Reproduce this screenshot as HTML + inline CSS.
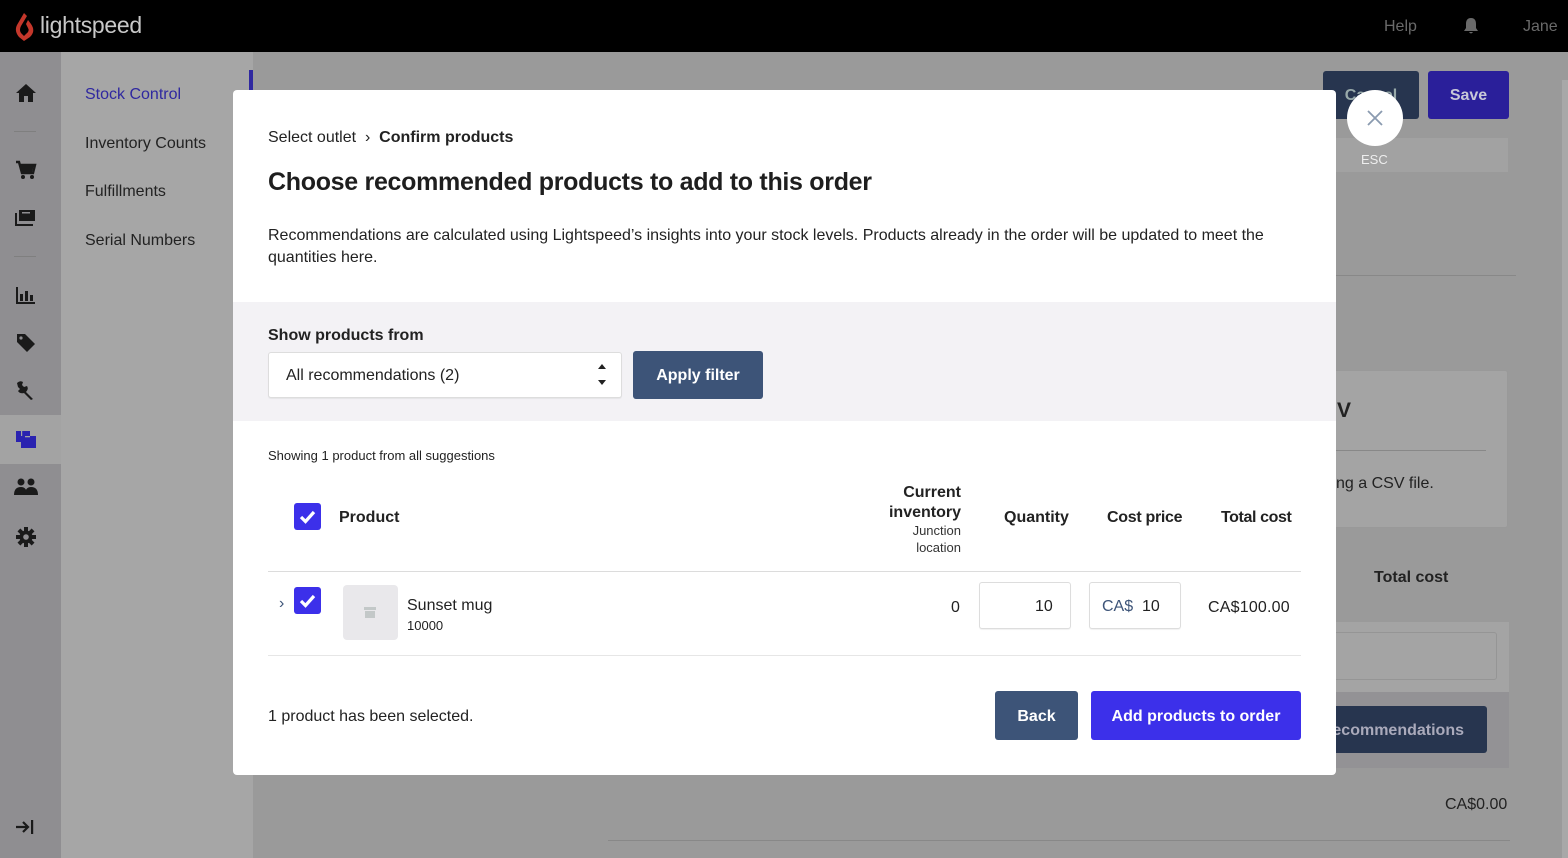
<!DOCTYPE html>
<html><head><meta charset="utf-8"><style>
*{margin:0;padding:0;box-sizing:border-box}
body{width:1568px;height:858px;overflow:hidden;position:relative;background:#9a9a9a;font-family:"Liberation Sans",sans-serif;color:#222}
.a{position:absolute}
.t{position:absolute;white-space:nowrap}
.btn{position:absolute;color:#fff;font-weight:bold;font-size:16px;display:flex;align-items:center;justify-content:center;border-radius:3px;padding-top:2px}
.cb{position:absolute;width:27px;height:27px;background:#3c30ea;border-radius:3px}
.inp{position:absolute;border:1px solid #ddd;border-radius:3px;background:#fff;box-shadow:0 1px 1px rgba(0,0,0,.06)}
</style></head><body>
<div class="a" style="left:0;top:0;width:1568px;height:52px;background:#000"></div>
<svg class="a" style="left:14px;top:12px" width="24" height="30" viewBox="0 0 24 30"><path d="M10 1 L3 13 Q0 19 5 25 L10 29 L16 25 Q22 19 17 12 L14 8 L12 12 L14 16 Q16 19 12 22 L10 24 L7 21 Q5 18 7 14 L13 4 Z" fill="#c4372b"/></svg>
<div class="t" style="left:40px;top:12px;font-size:23px;color:#c8c8c8;letter-spacing:-0.3px">lightspeed</div>
<div class="t" style="left:1384px;top:18px;font-size:16px;color:#6a6a6a">Help</div>
<svg class="a" style="left:1463px;top:17px" width="16" height="18" viewBox="0 0 16 18"><path d="M8 1 C4 1 3 4 3 7 L3 11 L1 14 L15 14 L13 11 L13 7 C13 4 12 1 8 1Z M6 15 Q8 18 10 15Z" fill="#6a6a6a"/></svg>
<div class="t" style="left:1523px;top:18px;font-size:16px;color:#6a6a6a">Jane</div>
<div class="a" style="left:0;top:52px;width:61px;height:806px;background:#8f8e91"></div>
<div class="a" style="left:0;top:415px;width:61px;height:49px;background:#a3a3a3"></div>
<div class="a" style="left:61px;top:52px;width:192px;height:806px;background:#a6a6a6"></div>
<div class="a" style="left:14px;top:131px;width:22px;height:1px;background:#7f7f7f"></div>
<div class="a" style="left:14px;top:256px;width:22px;height:1px;background:#7f7f7f"></div>
<svg class="a" style="left:15px;top:83px" width="22" height="20" viewBox="0 0 22 20"><path d="M11 1 L1 10 L4 10 L4 19 L9 19 L9 13 L13 13 L13 19 L18 19 L18 10 L21 10Z" fill="#1a1a1a"/></svg>
<svg class="a" style="left:15px;top:160px" width="22" height="20" viewBox="0 0 22 20"><path d="M1 2 L4 2 L7 13 L18 13 L20 5 L5 5" fill="none" stroke="#1a1a1a" stroke-width="2.4"/><path d="M6 5 L19 5 L17 12 L7 12Z" fill="#1a1a1a"/><circle cx="8" cy="17" r="2" fill="#1a1a1a"/><circle cx="17" cy="17" r="2" fill="#1a1a1a"/></svg>
<svg class="a" style="left:15px;top:209px" width="22" height="18" viewBox="0 0 22 18"><rect x="4" y="1" width="16" height="11" fill="#1a1a1a"/><path d="M1 4 L1 16 L18 16" fill="none" stroke="#1a1a1a" stroke-width="2"/><rect x="7" y="3" width="8" height="1.5" fill="#8f8e91"/></svg>
<svg class="a" style="left:16px;top:286px" width="20" height="18" viewBox="0 0 20 18"><path d="M1 1 L1 17 L19 17" fill="none" stroke="#1a1a1a" stroke-width="2"/><rect x="4" y="8" width="3" height="7" fill="#1a1a1a"/><rect x="9" y="5" width="3" height="10" fill="#1a1a1a"/><rect x="14" y="9" width="3" height="6" fill="#1a1a1a"/></svg>
<svg class="a" style="left:16px;top:333px" width="20" height="20" viewBox="0 0 20 20"><path d="M1 1 L9 1 L19 11 L11 19 L1 9Z" fill="#1a1a1a"/><circle cx="5" cy="5" r="1.6" fill="#8f8e91"/></svg>
<svg class="a" style="left:14px;top:379px" width="22" height="22" viewBox="0 0 22 22"><path d="M3 4 Q6 1 9 3 L8 6 L10 8 L13 7 Q15 10 12 13 L19 20 L17 21 L10 14 Q6 15 4 12 L6 10 L4 8Z" fill="#1a1a1a"/></svg>
<svg class="a" style="left:16px;top:430px" width="20" height="19" viewBox="0 0 20 19"><rect x="0" y="1" width="14" height="11" fill="#2a22b0"/><rect x="5" y="6" width="15" height="12" fill="#2a22b0"/><rect x="5" y="1" width="1.2" height="5" fill="#a3a3a3"/><rect x="9" y="6" width="5" height="1.3" fill="#a3a3a3"/></svg>
<svg class="a" style="left:14px;top:478px" width="24" height="18" viewBox="0 0 24 18"><circle cx="7" cy="4" r="3.5" fill="#1a1a1a"/><circle cx="17" cy="4" r="3.5" fill="#1a1a1a"/><path d="M0 17 Q0 9 7 9 Q13 9 13 17Z M11 17 Q11 9 17 9 Q24 9 24 17Z" fill="#1a1a1a"/></svg>
<svg class="a" style="left:16px;top:527px" width="20" height="20" viewBox="0 0 20 20"><g fill="#1a1a1a"><circle cx="10" cy="10" r="6.5"/><rect x="8" y="0" width="4" height="20"/><rect x="0" y="8" width="20" height="4"/><rect x="8" y="0" width="4" height="20" transform="rotate(45 10 10)"/><rect x="8" y="0" width="4" height="20" transform="rotate(-45 10 10)"/></g><circle cx="10" cy="10" r="2.8" fill="#8f8e91"/></svg>
<svg class="a" style="left:15px;top:818px" width="20" height="18" viewBox="0 0 20 18"><path d="M1 9 L13 9 M8 4 L13 9 L8 14" fill="none" stroke="#1a1a1a" stroke-width="2.2"/><rect x="16" y="2" width="2.2" height="14" fill="#1a1a1a"/></svg>
<div class="t" style="left:85px;top:86px;font-size:16px;color:#2f28a0">Stock Control</div>
<div class="t" style="left:85px;top:135px;font-size:16px">Inventory Counts</div>
<div class="t" style="left:85px;top:183px;font-size:16px">Fulfillments</div>
<div class="t" style="left:85px;top:232px;font-size:16px">Serial Numbers</div>
<div class="a" style="left:249px;top:70px;width:4px;height:20px;background:#2f28a0"></div>
<div class="btn" style="left:1323px;top:71px;width:96px;height:48px;background:#27354f;color:#9aa">Cancel</div>
<div class="btn" style="left:1428px;top:71px;width:81px;height:48px;background:#2a1f9a;color:#c8c8d8">Save</div>
<div class="a" style="left:1336px;top:138px;width:172px;height:34px;background:#a2a2a2"></div>
<div class="a" style="left:1336px;top:275px;width:180px;height:1px;background:#888"></div>
<div class="a" style="left:1330px;top:370px;width:178px;height:158px;background:#a4a4a4;border:1px solid #999;border-radius:3px"></div>
<div class="t" style="left:1337px;top:399px;font-size:21px;font-weight:bold">V</div>
<div class="a" style="left:1336px;top:450px;width:150px;height:1px;background:#888"></div>
<div class="t" style="left:1336px;top:475px;font-size:16px">ng a CSV file.</div>
<div class="t" style="left:1374px;top:569px;font-size:16px;font-weight:bold">Total cost</div>
<div class="a" style="left:1336px;top:622px;width:173px;height:146px;background:#939295"></div>
<div class="a" style="left:1336px;top:622px;width:173px;height:70px;background:#a4a4a4"></div>
<div class="a" style="left:1330px;top:632px;width:167px;height:48px;background:#a4a4a4;border:1px solid #959595;border-radius:3px"></div>
<div class="btn" style="left:1320px;top:706px;width:167px;height:47px;background:#27354f;color:#aab;justify-content:flex-end;padding-right:23px">ecommendations</div>
<div class="t" style="left:1445px;top:796px;font-size:16px">CA$0.00</div>
<div class="a" style="left:608px;top:840px;width:902px;height:1px;background:#888"></div>
<div class="a" style="left:1562px;top:80px;width:6px;height:778px;background:#a8a8a8"></div>
<div class="a" style="left:233px;top:90px;width:1103px;height:685px;background:#fff;border-radius:4px"></div>
<div class="t" style="left:268px;top:129px;font-size:16px">Select outlet &nbsp;›&nbsp; <b>Confirm products</b></div>
<div class="t" style="left:268px;top:168px;font-size:25px;font-weight:bold;color:#1e1e1e;letter-spacing:-0.3px">Choose recommended products to add to this order</div>
<div class="a" style="left:268px;top:225px;width:1020px;font-size:16px;line-height:22px">Recommendations are calculated using Lightspeed’s insights into your stock levels. Products already in the order will be updated to meet the quantities here.</div>
<div class="a" style="left:233px;top:302px;width:1103px;height:119px;background:#f3f2f5"></div>
<div class="t" style="left:268px;top:327px;font-size:16px;font-weight:bold">Show products from</div>
<div class="inp" style="left:268px;top:352px;width:354px;height:46px"></div>
<div class="t" style="left:286px;top:367px;font-size:16px">All recommendations (2)</div>
<svg class="a" style="left:597px;top:362px" width="10" height="26" viewBox="0 0 10 26"><path d="M1 7 L5 2 L9 7Z M1 18 L5 23 L9 18Z" fill="#222"/></svg>
<div class="btn" style="left:633px;top:351px;width:130px;height:48px;background:#3d5478">Apply filter</div>
<div class="t" style="left:268px;top:448px;font-size:13px">Showing 1 product from all suggestions</div>
<div class="cb" style="left:294px;top:503px"></div>
<svg class="a" style="left:294px;top:503px" width="27" height="27" viewBox="0 0 27 27"><path d="M7 14 L11.5 18.5 L20 9" fill="none" stroke="#fff" stroke-width="3.2"/></svg>
<div class="t" style="left:339px;top:509px;font-size:16px;font-weight:bold">Product</div>
<div class="a" style="left:840px;top:483px;width:121px;text-align:right;font-size:16px;font-weight:bold;line-height:20px">Current<br>inventory</div>
<div class="a" style="left:840px;top:522px;width:121px;text-align:right;font-size:13px;line-height:17px;color:#333">Junction<br>location</div>
<div class="t" style="left:1004px;top:509px;font-size:16px;font-weight:bold">Quantity</div>
<div class="t" style="left:1107px;top:509px;font-size:16px;font-weight:bold;letter-spacing:-0.3px">Cost price</div>
<div class="t" style="left:1221px;top:509px;font-size:16px;font-weight:bold;letter-spacing:-0.4px">Total cost</div>
<div class="a" style="left:268px;top:571px;width:1033px;height:1px;background:#dcdcdc"></div>
<div class="t" style="left:279px;top:595px;font-size:16px;color:#3d5478">›</div>
<div class="cb" style="left:294px;top:587px"></div>
<svg class="a" style="left:294px;top:587px" width="27" height="27" viewBox="0 0 27 27"><path d="M7 14 L11.5 18.5 L20 9" fill="none" stroke="#fff" stroke-width="3.2"/></svg>
<div class="a" style="left:343px;top:585px;width:55px;height:55px;background:#e9e8eb;border-radius:4px"></div>
<div class="a" style="left:364px;top:607px;width:12px;height:3px;background:#c3c8c8"></div>
<div class="a" style="left:365px;top:611px;width:10px;height:7px;background:#c3c8c8"></div>
<div class="t" style="left:407px;top:597px;font-size:16px">Sunset mug</div>
<div class="t" style="left:407px;top:618px;font-size:13px">10000</div>
<div class="t" style="left:951px;top:599px;font-size:16px">0</div>
<div class="inp" style="left:979px;top:582px;width:92px;height:47px"></div>
<div class="t" style="left:1035px;top:598px;font-size:16px">10</div>
<div class="inp" style="left:1089px;top:582px;width:92px;height:47px"></div>
<div class="t" style="left:1102px;top:598px;font-size:16px"><span style="color:#3d5478">CA$</span>&nbsp; 10</div>
<div class="t" style="left:1208px;top:599px;font-size:16px;letter-spacing:0.2px">CA$100.00</div>
<div class="a" style="left:268px;top:655px;width:1033px;height:1px;background:#e6e6e6"></div>
<div class="t" style="left:268px;top:708px;font-size:16px">1 product has been selected.</div>
<div class="btn" style="left:995px;top:691px;width:83px;height:49px;background:#3d5478">Back</div>
<div class="btn" style="left:1091px;top:691px;width:210px;height:49px;background:#3c30ea">Add products to order</div>
<div class="a" style="left:1347px;top:90px;width:56px;height:56px;border-radius:50%;background:#fff"></div>
<svg class="a" style="left:1366px;top:109px" width="18" height="18" viewBox="0 0 18 18"><path d="M2 2 L16 16 M16 2 L2 16" stroke="#8a9ab0" stroke-width="1.8"/></svg>
<div class="t" style="left:1361px;top:152px;font-size:13px;color:#eee">ESC</div>
</body></html>
